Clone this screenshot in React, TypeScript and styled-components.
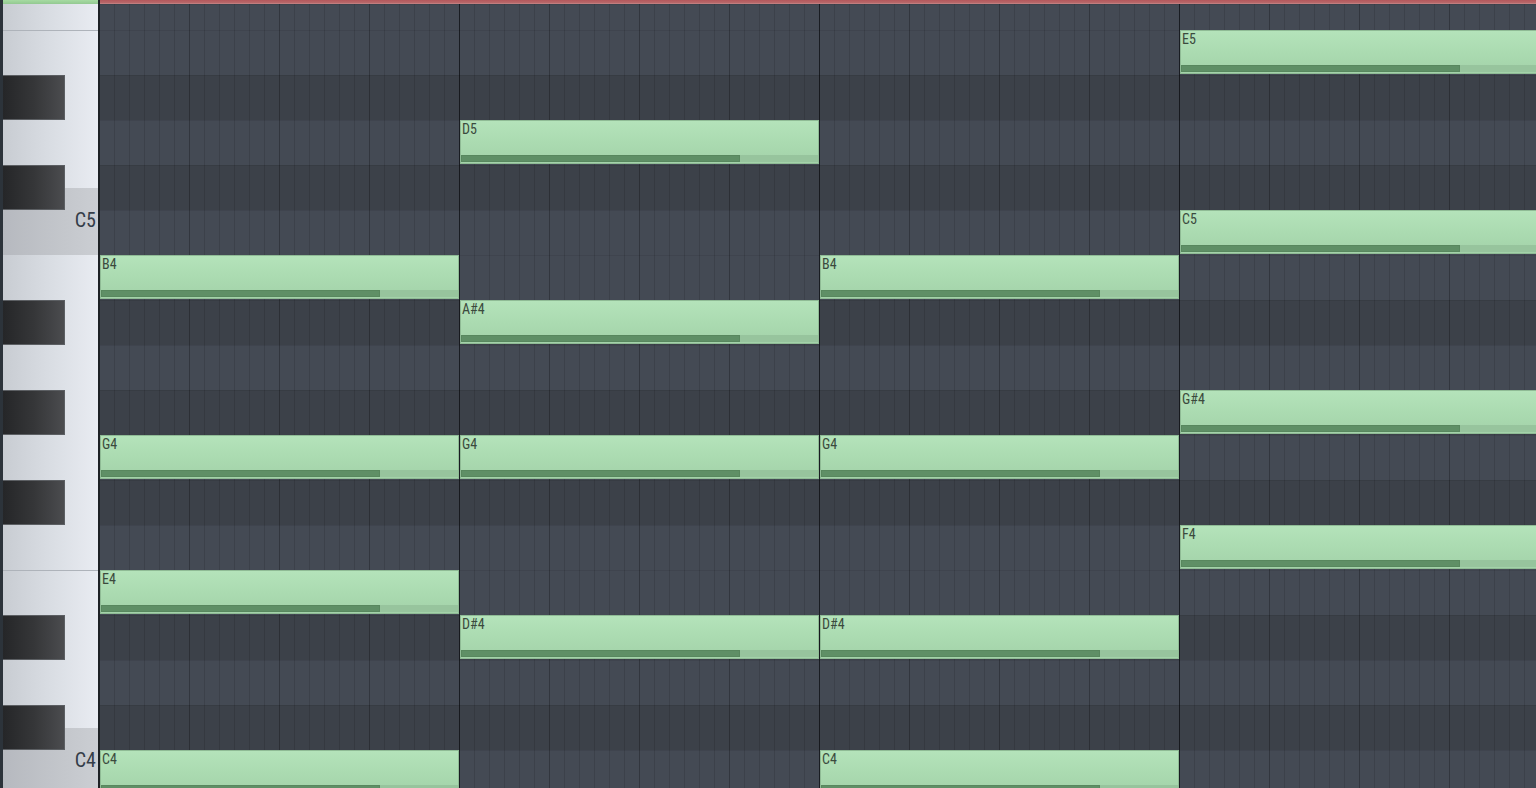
import React from 'react';
import styled, { createGlobalStyle } from 'styled-components';

const GlobalStyle = createGlobalStyle`
  html, body { margin: 0; padding: 0; background: #3b4149; overflow: hidden; }
  #root { width: 1536px; height: 788px; }
`;

const ROWS = ['F5', 'E5', 'D#5', 'D5', 'C#5', 'C5', 'B4', 'A#4', 'A4', 'G#4', 'G4', 'F#4', 'F4', 'E4', 'D#4', 'D4', 'C#4', 'C4'];
const isBlack = (n: string) => n.includes('#');

const NOTES: { name: string; bar: number }[] = [
  { name: 'B4', bar: 0 }, { name: 'G4', bar: 0 }, { name: 'E4', bar: 0 }, { name: 'C4', bar: 0 },
  { name: 'D5', bar: 1 }, { name: 'A#4', bar: 1 }, { name: 'G4', bar: 1 }, { name: 'D#4', bar: 1 },
  { name: 'B4', bar: 2 }, { name: 'G4', bar: 2 }, { name: 'D#4', bar: 2 }, { name: 'C4', bar: 2 },
  { name: 'E5', bar: 3 }, { name: 'C5', bar: 3 }, { name: 'G#4', bar: 3 }, { name: 'F4', bar: 3 },
];

// keyboard segments on a 22.5px half-row grid (row 1 = partial top)
const WHITE_SEGMENTS: { start: number; span: number; edge?: boolean; label?: string }[] = [
  { start: 1, span: 1 },
  { start: 2, span: 7, edge: true },
  { start: 9, span: 3, label: 'C5' },
  { start: 12, span: 14 },
  { start: 26, span: 7, edge: true },
  { start: 33, span: 3, label: 'C4' },
];
const BLACK_KEYS = [4, 8, 14, 18, 22, 28, 32];

const Page = styled.div`
  width: 1536px;
  height: 788px;
  overflow: hidden;
  display: flex;
  flex-direction: column;
  background: #3b4149;
`;

const TopBar = styled.div`
  height: 4px;
  flex: none;
  display: flex;
`;

const KeysTop = styled.div`
  width: 100px;
  flex: none;
  box-sizing: border-box;
  border-left: 3px solid #2c333a;
  border-right: 2px solid #1d2125;
  background: linear-gradient(180deg, #a6dba2 0%, #93c991 100%);
`;

const RollTop = styled.div`
  flex: 1;
  background: linear-gradient(180deg, #b4585c 0%, #b8686a 70%, #c98c8c 100%);
`;

const Body = styled.div`
  flex: 1;
  min-height: 0;
  display: flex;
  overflow: hidden;
`;

const Keyboard = styled.div`
  width: 100px;
  flex: none;
  box-sizing: border-box;
  border-left: 3px solid #2c333a;
  border-right: 2px solid #1d2125;
  background: #2c333a;
  display: grid;
  grid-template-columns: 62px 1fr;
  grid-template-rows: 26px repeat(34, 22.5px);
  overflow: hidden;
`;

const WhiteKey = styled.div<{ $start: number; $span: number; $edge?: boolean; $c?: boolean }>`
  grid-column: 1 / -1;
  grid-row: ${(p) => p.$start} / span ${(p) => p.$span};
  box-sizing: border-box;
  border-top: ${(p) => (p.$edge ? '1px solid #aeb3ba' : 'none')};
  background: ${(p) =>
    p.$c
      ? 'linear-gradient(90deg, #b6b9bf 0%, #c3c6cb 60%, #cbced3 100%)'
      : 'linear-gradient(90deg, #c8ccd2 0%, #d9dde3 50%, #e9ecf2 100%)'};
  display: flex;
  justify-content: flex-end;
  align-items: flex-start;
`;

const KeyLabel = styled.span`
  font-family: 'Liberation Sans Narrow', 'Roboto Condensed', 'DejaVu Sans Condensed', Roboto, sans-serif;
  font-size: 20px;
  line-height: 20px;
  color: #343d49;
  padding: 22px 2px 0 0;
`;

const BlackKey = styled.div<{ $start: number }>`
  grid-column: 1;
  grid-row: ${(p) => p.$start} / span 2;
  z-index: 1;
  box-sizing: border-box;
  border: 1px solid #5c5f63;
  border-left: none;
  background: linear-gradient(90deg, #252628 0%, #353638 50%, #4b4c4f 100%);
`;

const Roll = styled.div`
  flex: 1;
  min-width: 0;
  overflow: hidden;
  display: grid;
  grid-template-columns: repeat(4, 360px);
  grid-template-rows: 26px repeat(17, 45px);
`;

const Lane = styled.div<{ $row: number; $dark: boolean }>`
  grid-column: 1 / -1;
  grid-row: ${(p) => p.$row};
  box-sizing: border-box;
  border-top: 1px solid rgba(0, 0, 0, 0.07);
  background-color: ${(p) => (p.$dark ? '#3c4149' : '#444a54')};
  background-image:
    repeating-linear-gradient(90deg, transparent 0 359px, rgba(8, 10, 14, 0.6) 359px 360px),
    repeating-linear-gradient(90deg, transparent 0 89px, rgba(0, 0, 0, 0.17) 89px 90px),
    repeating-linear-gradient(90deg, transparent 0 14px, rgba(0, 0, 0, 0.12) 14px 15px);
`;

const Note = styled.div<{ $bar: number; $row: number }>`
  grid-column: ${(p) => p.$bar + 1};
  grid-row: ${(p) => p.$row};
  z-index: 1;
  margin: 0 1px 1px 0;
  box-sizing: border-box;
  border: 1px solid #8fbb95;
  background: linear-gradient(180deg, #b4e3ba 0%, #abdbb1 50%, #a3d2a9 100%);
  display: flex;
  flex-direction: column;
  overflow: hidden;
`;

const NoteLabel = styled.span`
  font-family: 'Liberation Sans Narrow', 'Roboto Condensed', 'DejaVu Sans Condensed', Roboto, sans-serif;
  font-size: 14px;
  line-height: 14px;
  color: #3b4a3d;
  padding: 1px 0 0 1px;
`;

const VelocityTrack = styled.div`
  margin-top: auto;
  margin-bottom: 1px;
  height: 7px;
  background: #97c49d;
  display: flex;
`;

const VelocityFill = styled.div`
  width: 279px;
  box-sizing: border-box;
  border: 1px solid #58875e;
  background: #5f8f66;
`;

export default function App() {
  return (
    <>
      <GlobalStyle />
      <Page>
        <TopBar>
          <KeysTop />
          <RollTop />
        </TopBar>
        <Body>
          <Keyboard>
            {WHITE_SEGMENTS.map((s) => (
              <WhiteKey key={s.start} $start={s.start} $span={s.span} $edge={s.edge} $c={!!s.label}>
                {s.label && <KeyLabel>{s.label}</KeyLabel>}
              </WhiteKey>
            ))}
            {BLACK_KEYS.map((b) => (
              <BlackKey key={b} $start={b} />
            ))}
          </Keyboard>
          <Roll>
            {ROWS.map((r, i) => (
              <Lane key={r} $row={i + 1} $dark={isBlack(r)} />
            ))}
            {NOTES.map((n, i) => (
              <Note key={i} $bar={n.bar} $row={ROWS.indexOf(n.name) + 1}>
                <NoteLabel>{n.name}</NoteLabel>
                <VelocityTrack>
                  <VelocityFill />
                </VelocityTrack>
              </Note>
            ))}
          </Roll>
        </Body>
      </Page>
    </>
  );
}
